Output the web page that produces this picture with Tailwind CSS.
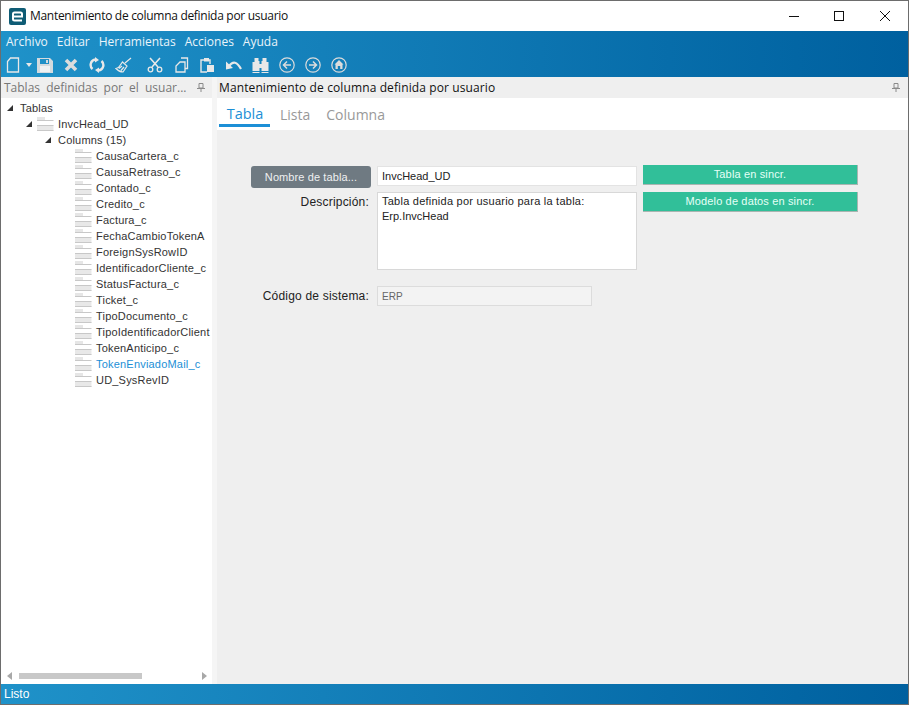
<!DOCTYPE html>
<html lang="es">
<head>
  <meta charset="UTF-8">
  <title>Mantenimiento de columna definida por usuario</title>
  <script src="https://cdn.jsdelivr.net/npm/@tailwindcss/browser@4"></script>
</head>
<body class="m-0 h-[705px] w-[909px] overflow-hidden bg-white font-['Liberation_Sans',sans-serif] text-[11px] text-[#222]">
<div class="flex h-[705px] w-[909px] flex-col border border-[#6d6d6d]">

  <!-- title bar -->
  <div class="flex h-[30px] shrink-0 items-center bg-white">
    <svg class="ml-[8px] h-[17px] w-[17px]" viewBox="0 0 17 17"><rect width="17" height="17" rx="2" fill="#0f5c75"/><path d="M4 8.500h9V6q0-1.500-1.500-1.500h-6Q4 4.500 4 6v5q0 1.500 1.500 1.500H13" fill="none" stroke="#fff" stroke-width="2"/></svg>
    <span class="ml-[4px] font-['Open_Sans',sans-serif] text-[12px] tracking-[-0.3px] text-[#111]">Mantenimiento de columna definida por usuario</span>
    <div class="ml-auto flex items-center">
      <svg class="h-[12px] w-[12px]" viewBox="0 0 12 12"><path d="M1 6.500h10" stroke="#111" stroke-width="1"/></svg>
      <svg class="ml-[33px] h-[12px] w-[12px]" viewBox="0 0 12 12"><rect x="1.500" y="1.500" width="9" height="9" fill="none" stroke="#111"/></svg>
      <svg class="ml-[34px] mr-[17px] h-[12px] w-[12px]" viewBox="0 0 12 12"><path d="M1 1l10 10M11 1L1 11" stroke="#111"/></svg>
    </div>
  </div>

  <!-- menu + toolbar -->
  <div class="h-[46px] shrink-0 bg-gradient-to-r from-[#1f92c9] to-[#00609f] text-white">
    <div class="flex h-[22px] items-center gap-[9px] pl-[5px] font-['Open_Sans',sans-serif] text-[12px] text-[#eaf4fa]">
      <span>Archivo</span><span>Editar</span><span>Herramientas</span><span>Acciones</span><span>Ayuda</span>
    </div>
    <div class="flex h-[24px] items-center pl-[5px]">
      <svg class="h-[16px] w-[14px]" viewBox="0 0 14 16"><path d="M4.500 1H12.500V15H1.500V4.500Z" fill="none" stroke="#e8e8e8" stroke-width="1.300"/></svg>
      <svg class="ml-[6px] h-[4px] w-[6px]" viewBox="0 0 6 4"><path d="M0 0h6L3 4z" fill="#e8e8e8"/></svg>
      <svg class="ml-[5px] h-[15px] w-[16px]" viewBox="0 0 16 15"><path d="M0 0H13L16 3V15H0ZM3 1V6H12V1ZM9 2H11V5H9Z" fill="#d3dade" fill-rule="evenodd"/><rect x="3" y="8" width="10" height="6" fill="#eef1f2"/></svg>
      <svg class="ml-[11px] h-[14px] w-[14px]" viewBox="0 0 14 14"><path d="M2 2L12 12M12 2L2 12" stroke="#dcdcdc" stroke-width="3.600"/></svg>
      <svg class="ml-[11px] h-[16px] w-[16px]" viewBox="0 0 16 16"><path d="M6 2.500A5.500 5.500 0 0 0 3.500 12M10 13.500A5.500 5.500 0 0 0 12.500 4" fill="none" stroke="#e8e8e8" stroke-width="2.400"/><path d="M6 0L10 3L6 5.500ZM10 16L6 13L10 10.500Z" fill="#e8e8e8"/></svg>
      <svg class="ml-[10px] h-[16px] w-[17px]" viewBox="0 0 17 16"><path d="M16 1L10 6M7.500 5L12 9L8 15Q4 15 1 11.500Q4 11 5 8.500ZM4 11.500L7 9M6 13.500L9 10" fill="none" stroke="#e8e8e8" stroke-width="1.200"/></svg>
      <svg class="ml-[15px] h-[16px] w-[16px]" viewBox="0 0 16 16"><path d="M3 1L11 10M13 1L5 10" stroke="#e8e8e8" stroke-width="1.600"/><circle cx="3.500" cy="12.500" r="2.300" fill="none" stroke="#e8e8e8" stroke-width="1.300"/><circle cx="12.500" cy="12.500" r="2.300" fill="none" stroke="#e8e8e8" stroke-width="1.300"/></svg>
      <svg class="ml-[12px] h-[16px] w-[14px]" viewBox="0 0 14 16"><path d="M6 1H12.500V11.500H10M5 5H10V15H1V9Z" fill="none" stroke="#e8e8e8" stroke-width="1.300"/></svg>
      <svg class="ml-[11px] h-[16px] w-[15px]" viewBox="0 0 15 16"><path d="M4 3H1V15H7M10 7V3H7" fill="none" stroke="#e8e8e8" stroke-width="1.400"/><rect x="4" y="1" width="5" height="3.500" fill="#e8e8e8"/><path d="M7 8H14V15H7Z" fill="#e8e8e8"/></svg>
      <svg class="ml-[11px] h-[12px] w-[16px]" viewBox="0 0 16 12"><path d="M3 7Q9 -1 15 10" fill="none" stroke="#e8e8e8" stroke-width="2.200"/><path d="M0 2.500L7 9L0 10.500Z" fill="#e8e8e8"/></svg>
      <svg class="ml-[10px] h-[15px] w-[17px]" viewBox="0 0 16 15"><path d="M2 0H6V3H7V13H0V4H2ZM10 0H14V4H16V13H9V3H10ZM7 6H9V10H7ZM0 14H7V15H0ZM9 14H16V15H9Z" fill="#e8e8e8"/></svg>
      <svg class="ml-[10px] h-[16px] w-[16px]" viewBox="0 0 16 16"><circle cx="8" cy="8" r="7.200" fill="none" stroke="#dcdcdc" stroke-width="1.200"/><path d="M12 8H5M8 4.500L4.500 8L8 11.500" fill="none" stroke="#dcdcdc" stroke-width="1.500"/></svg>
      <svg class="ml-[10px] h-[16px] w-[16px]" viewBox="0 0 16 16"><circle cx="8" cy="8" r="7.200" fill="none" stroke="#dcdcdc" stroke-width="1.200"/><path d="M4 8H11M8 4.500L11.500 8L8 11.500" fill="none" stroke="#dcdcdc" stroke-width="1.500"/></svg>
      <svg class="ml-[10px] h-[16px] w-[16px]" viewBox="0 0 16 16"><circle cx="8" cy="8" r="7.200" fill="none" stroke="#dcdcdc" stroke-width="1.200"/><path d="M8 3L12.500 7.500H11.500V12H9.200V9H6.800V12H4.500V7.500H3.500Z" fill="#dcdcdc"/></svg>
    </div>
  </div>

  <!-- main -->
  <div class="flex min-h-0 flex-1 bg-[#efefef]">

    <!-- left panel -->
    <div class="flex w-[211px] shrink-0 flex-col">
      <div class="flex h-[21px] shrink-0 items-center bg-[#efefef] pl-[3px] font-['Open_Sans',sans-serif] text-[12px] text-[#777] [word-spacing:3px]">
        <span>Tablas definidas por el usuar...</span>
        <svg class="ml-auto mr-[7px] h-[9px] w-[8px]" viewBox="0 0 8 9"><path d="M2 .5H6V5H2ZM0 5.500H8M4 5.500V9" fill="none" stroke="#8a8a8a"/></svg>
      </div>
      <div class="relative flex-1 overflow-hidden bg-white pt-[2px] tracking-[0.2px] text-[#333]">
        <div class="flex h-[16px] items-center pl-[6px]">
          <svg class="h-[6px] w-[6px]" viewBox="0 0 6 6"><path d="M6 0V6H0Z" fill="#333"/></svg><span class="ml-[7px]">Tablas</span>
        </div>
        <div class="flex h-[16px] items-center pl-[25px]">
          <svg class="h-[6px] w-[6px]" viewBox="0 0 6 6"><path d="M6 0V6H0Z" fill="#333"/></svg>
          <svg class="ml-[5px] h-[16px] w-[17px]" viewBox="0 0 17 16"><path d="M0 1H8V4H0Z" fill="#e6e6e6"/><path d="M0 9.500H16.500V15H0Z" fill="#e8e8e8"/><path d="M0 4.500H16.500M0 9.500H16.500M0 14.500H16.500" stroke="#c8c8c8"/></svg>
          <span class="ml-[4px]">InvcHead_UD</span>
        </div>
        <div class="flex h-[16px] items-center pl-[44px]">
          <svg class="h-[6px] w-[6px]" viewBox="0 0 6 6"><path d="M6 0V6H0Z" fill="#333"/></svg><span class="ml-[7px]">Columns (15)</span>
        </div>
        <div class="flex h-[16px] items-center whitespace-nowrap pl-[74px]"><svg class="h-[16px] w-[17px] shrink-0" viewBox="0 0 17 16"><path d="M0 1H8V4H0Z" fill="#e6e6e6"/><path d="M0 9.500H16.500V15H0Z" fill="#e8e8e8"/><path d="M0 4.500H16.500M0 9.500H16.500M0 14.500H16.500" stroke="#c8c8c8"/></svg><span class="ml-[4px]">CausaCartera_c</span></div>
        <div class="flex h-[16px] items-center whitespace-nowrap pl-[74px]"><svg class="h-[16px] w-[17px] shrink-0" viewBox="0 0 17 16"><path d="M0 1H8V4H0Z" fill="#e6e6e6"/><path d="M0 9.500H16.500V15H0Z" fill="#e8e8e8"/><path d="M0 4.500H16.500M0 9.500H16.500M0 14.500H16.500" stroke="#c8c8c8"/></svg><span class="ml-[4px]">CausaRetraso_c</span></div>
        <div class="flex h-[16px] items-center whitespace-nowrap pl-[74px]"><svg class="h-[16px] w-[17px] shrink-0" viewBox="0 0 17 16"><path d="M0 1H8V4H0Z" fill="#e6e6e6"/><path d="M0 9.500H16.500V15H0Z" fill="#e8e8e8"/><path d="M0 4.500H16.500M0 9.500H16.500M0 14.500H16.500" stroke="#c8c8c8"/></svg><span class="ml-[4px]">Contado_c</span></div>
        <div class="flex h-[16px] items-center whitespace-nowrap pl-[74px]"><svg class="h-[16px] w-[17px] shrink-0" viewBox="0 0 17 16"><path d="M0 1H8V4H0Z" fill="#e6e6e6"/><path d="M0 9.500H16.500V15H0Z" fill="#e8e8e8"/><path d="M0 4.500H16.500M0 9.500H16.500M0 14.500H16.500" stroke="#c8c8c8"/></svg><span class="ml-[4px]">Credito_c</span></div>
        <div class="flex h-[16px] items-center whitespace-nowrap pl-[74px]"><svg class="h-[16px] w-[17px] shrink-0" viewBox="0 0 17 16"><path d="M0 1H8V4H0Z" fill="#e6e6e6"/><path d="M0 9.500H16.500V15H0Z" fill="#e8e8e8"/><path d="M0 4.500H16.500M0 9.500H16.500M0 14.500H16.500" stroke="#c8c8c8"/></svg><span class="ml-[4px]">Factura_c</span></div>
        <div class="flex h-[16px] items-center whitespace-nowrap pl-[74px]"><svg class="h-[16px] w-[17px] shrink-0" viewBox="0 0 17 16"><path d="M0 1H8V4H0Z" fill="#e6e6e6"/><path d="M0 9.500H16.500V15H0Z" fill="#e8e8e8"/><path d="M0 4.500H16.500M0 9.500H16.500M0 14.500H16.500" stroke="#c8c8c8"/></svg><span class="ml-[4px]">FechaCambioTokenA</span></div>
        <div class="flex h-[16px] items-center whitespace-nowrap pl-[74px]"><svg class="h-[16px] w-[17px] shrink-0" viewBox="0 0 17 16"><path d="M0 1H8V4H0Z" fill="#e6e6e6"/><path d="M0 9.500H16.500V15H0Z" fill="#e8e8e8"/><path d="M0 4.500H16.500M0 9.500H16.500M0 14.500H16.500" stroke="#c8c8c8"/></svg><span class="ml-[4px]">ForeignSysRowID</span></div>
        <div class="flex h-[16px] items-center whitespace-nowrap pl-[74px]"><svg class="h-[16px] w-[17px] shrink-0" viewBox="0 0 17 16"><path d="M0 1H8V4H0Z" fill="#e6e6e6"/><path d="M0 9.500H16.500V15H0Z" fill="#e8e8e8"/><path d="M0 4.500H16.500M0 9.500H16.500M0 14.500H16.500" stroke="#c8c8c8"/></svg><span class="ml-[4px]">IdentificadorCliente_c</span></div>
        <div class="flex h-[16px] items-center whitespace-nowrap pl-[74px]"><svg class="h-[16px] w-[17px] shrink-0" viewBox="0 0 17 16"><path d="M0 1H8V4H0Z" fill="#e6e6e6"/><path d="M0 9.500H16.500V15H0Z" fill="#e8e8e8"/><path d="M0 4.500H16.500M0 9.500H16.500M0 14.500H16.500" stroke="#c8c8c8"/></svg><span class="ml-[4px]">StatusFactura_c</span></div>
        <div class="flex h-[16px] items-center whitespace-nowrap pl-[74px]"><svg class="h-[16px] w-[17px] shrink-0" viewBox="0 0 17 16"><path d="M0 1H8V4H0Z" fill="#e6e6e6"/><path d="M0 9.500H16.500V15H0Z" fill="#e8e8e8"/><path d="M0 4.500H16.500M0 9.500H16.500M0 14.500H16.500" stroke="#c8c8c8"/></svg><span class="ml-[4px]">Ticket_c</span></div>
        <div class="flex h-[16px] items-center whitespace-nowrap pl-[74px]"><svg class="h-[16px] w-[17px] shrink-0" viewBox="0 0 17 16"><path d="M0 1H8V4H0Z" fill="#e6e6e6"/><path d="M0 9.500H16.500V15H0Z" fill="#e8e8e8"/><path d="M0 4.500H16.500M0 9.500H16.500M0 14.500H16.500" stroke="#c8c8c8"/></svg><span class="ml-[4px]">TipoDocumento_c</span></div>
        <div class="flex h-[16px] items-center whitespace-nowrap pl-[74px]"><svg class="h-[16px] w-[17px] shrink-0" viewBox="0 0 17 16"><path d="M0 1H8V4H0Z" fill="#e6e6e6"/><path d="M0 9.500H16.500V15H0Z" fill="#e8e8e8"/><path d="M0 4.500H16.500M0 9.500H16.500M0 14.500H16.500" stroke="#c8c8c8"/></svg><span class="ml-[4px]">TipoIdentificadorClient</span></div>
        <div class="flex h-[16px] items-center whitespace-nowrap pl-[74px]"><svg class="h-[16px] w-[17px] shrink-0" viewBox="0 0 17 16"><path d="M0 1H8V4H0Z" fill="#e6e6e6"/><path d="M0 9.500H16.500V15H0Z" fill="#e8e8e8"/><path d="M0 4.500H16.500M0 9.500H16.500M0 14.500H16.500" stroke="#c8c8c8"/></svg><span class="ml-[4px]">TokenAnticipo_c</span></div>
        <div class="flex h-[16px] items-center whitespace-nowrap pl-[74px]"><svg class="h-[16px] w-[17px] shrink-0" viewBox="0 0 17 16"><path d="M0 1H8V4H0Z" fill="#e6e6e6"/><path d="M0 9.500H16.500V15H0Z" fill="#e8e8e8"/><path d="M0 4.500H16.500M0 9.500H16.500M0 14.500H16.500" stroke="#c8c8c8"/></svg><span class="ml-[4px] text-[#1c8fd6]">TokenEnviadoMail_c</span></div>
        <div class="flex h-[16px] items-center whitespace-nowrap pl-[74px]"><svg class="h-[16px] w-[17px] shrink-0" viewBox="0 0 17 16"><path d="M0 1H8V4H0Z" fill="#e6e6e6"/><path d="M0 9.500H16.500V15H0Z" fill="#e8e8e8"/><path d="M0 4.500H16.500M0 9.500H16.500M0 14.500H16.500" stroke="#c8c8c8"/></svg><span class="ml-[4px]">UD_SysRevID</span></div>

        <!-- horizontal scroll -->
        <div class="absolute bottom-0 left-0 flex h-[17px] w-full items-center bg-white">
          <svg class="ml-[6px] h-[8px] w-[5px]" viewBox="0 0 5 8"><path d="M5 0V8L0 4Z" fill="#a8a8a8"/></svg>
          <div class="ml-[7px] h-[6px] w-[123px] bg-[#c8c8c8]"></div>
          <svg class="ml-auto mr-[5px] h-[8px] w-[5px]" viewBox="0 0 5 8"><path d="M0 0V8L5 4Z" fill="#a8a8a8"/></svg>
        </div>
      </div>
    </div>

    <!-- splitter -->
    <div class="w-[5px] shrink-0 bg-[#f5f5f5]"></div>

    <!-- right panel -->
    <div class="flex min-w-0 flex-1 flex-col">
      <div class="flex h-[21px] shrink-0 items-center pl-[2px] font-['Open_Sans',sans-serif] text-[12px] tracking-[0.11px] text-[#111]">
        <span>Mantenimiento de columna definida por usuario</span>
        <svg class="ml-auto mr-[8px] h-[9px] w-[8px]" viewBox="0 0 8 9"><path d="M2 .5H6V5H2ZM0 5.500H8M4 5.500V9" fill="none" stroke="#8a8a8a"/></svg>
      </div>
      <div class="flex h-[32px] shrink-0 items-start bg-white pl-[2px] font-['Open_Sans',sans-serif] text-[14px] text-[#999]">
        <div class="flex h-[29px] w-[51px] items-center justify-center border-b-[3px] border-[#1c8fd6] pl-[1px] pt-[5px] text-[14.500px] text-[#1c8fd6]">Tabla</div>
        <div class="ml-[10px] flex h-[33px] items-center">Lista</div>
        <div class="ml-[16px] flex h-[33px] items-center">Columna</div>
      </div>

      <div class="flex-1 pl-[34px] pt-[36px]">
        <div class="flex items-start">
          <div class="w-[120px] shrink-0">
            <div class="flex h-[22px] items-center justify-center rounded-[3px] bg-[#6f7a82] tracking-[0.1px] text-[#eef0f1]">Nombre de tabla...</div>
            <div class="mt-[6px] pr-[2px] text-right text-[12px] leading-[17px] tracking-[0.2px] text-[#222]">Descripción:</div>
          </div>
          <div class="ml-[6px] w-[260px] shrink-0">
            <div class="flex h-[20px] items-center border border-[#e3e3e3] bg-white pl-[4px] text-[#222]">InvcHead_UD</div>
            <div class="mt-[6px] h-[78px] border border-[#d8d8d8] bg-white px-[4px] pt-[1px] leading-[15px] text-[#222]"><span class="tracking-[0.24px]">Tabla definida por usuario para la tabla:</span><br>Erp.InvcHead</div>
          </div>
          <div class="ml-[6px] -mt-[1px] w-[215px] shrink-0 tracking-[0.15px]">
            <div class="flex h-[20px] items-center justify-center border-r border-b border-[#a9b5b1] bg-[#31bf99] text-[#e6fff7]">Tabla en sincr.</div>
            <div class="mt-[7px] flex h-[20px] items-center justify-center border-r border-b border-[#a9b5b1] bg-[#31bf99] text-[#e6fff7]">Modelo de datos en sincr.</div>
          </div>
        </div>
        <div class="mt-[16px] flex items-center">
          <div class="w-[120px] shrink-0 pr-[2px] text-right text-[12px] tracking-[0.2px] text-[#222]">Código de sistema:</div>
          <div class="ml-[6px] flex h-[20px] w-[215px] items-center border border-[#dcdcdc] bg-[#f3f3f3] pl-[4px] text-[10px] text-[#666]">ERP</div>
        </div>
      </div>
    </div>
  </div>

  <!-- status bar -->
  <div class="flex h-[20px] shrink-0 items-center bg-gradient-to-r from-[#1f92c9] to-[#00609f] pl-[3px] text-[12px] text-white">Listo</div>
</div>
</body>
</html>
